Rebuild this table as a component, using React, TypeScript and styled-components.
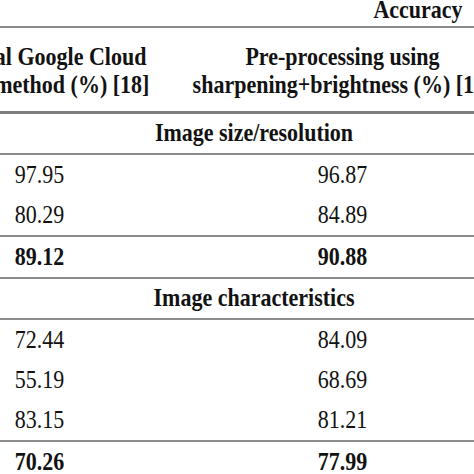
import React from "react";
import styled, { createGlobalStyle, css } from "styled-components";

const Global = createGlobalStyle`
  html, body { margin: 0; padding: 0; background: #ffffff; }
  body {
    font-family: "Liberation Serif", "Times New Roman", serif;
    color: #121212;
  }
`;

/* the source glyphs are slightly taller than they are wide */
const tall = css`
  transform: scaleY(1.15);
  transform-origin: 50% 50%;
`;

const Viewport = styled.div`
  width: 474px;
  height: 474px;
  overflow: hidden;
  background: #ffffff;
`;

const Table = styled.div`
  width: 606px;
  margin-left: -112px;
  display: flex;
  flex-direction: column;
  font-size: 22px;
`;

const Rule = styled.div<{ $thick?: boolean }>`
  height: ${(p) => (p.$thick ? 3 : 2)}px;
  background: ${(p) => (p.$thick ? "#7e7e7e" : "#8c8c8c")};
  flex: none;
`;

const GroupTitle = styled.div`
  height: 26px;
  padding: 2px 0 0 454px;
  box-sizing: border-box;
  line-height: 15px;
  font-weight: 700;
  text-align: center;
  white-space: nowrap;
`;

const Label = styled.span`
  display: inline-block;
  ${tall}
`;

const HeaderRow = styled.div`
  display: grid;
  grid-template-columns: 303px 303px;
  padding: 18.5px 0 15.8px;
  line-height: 24.35px;
  font-weight: 700;
`;

const HeaderCell = styled.div`
  text-align: center;
  white-space: nowrap;
  ${tall}
`;

const SectionRow = styled.div`
  height: 39px;
  padding-left: 126px;
  box-sizing: border-box;
  display: flex;
  align-items: center;
  justify-content: center;
  font-weight: 700;
  white-space: nowrap;
`;

const DataRow = styled.div<{ $total?: boolean }>`
  display: grid;
  grid-template-columns: 303px 303px;
  height: 40px;
  align-items: center;
  font-weight: ${(p) => (p.$total ? 700 : 400)};
`;

const Value = styled.div`
  text-align: center;
  ${tall}
`;

type Group = {
  title: string;
  rows: [string, string][];
  total: [string, string];
};

const groups: Group[] = [
  {
    title: "Image size/resolution",
    rows: [
      ["97.95", "96.87"],
      ["80.29", "84.89"],
    ],
    total: ["89.12", "90.88"],
  },
  {
    title: "Image characteristics",
    rows: [
      ["72.44", "84.09"],
      ["55.19", "68.69"],
      ["83.15", "81.21"],
    ],
    total: ["70.26", "77.99"],
  },
];

export default function App() {
  return (
    <>
      <Global />
      <Viewport>
        <Table>
          <GroupTitle>
            <Label>Accuracy</Label>
          </GroupTitle>
          <Rule />
          <HeaderRow>
            <HeaderCell>
              Original Google Cloud
              <br />
              Vision method (%) [18]
            </HeaderCell>
            <HeaderCell>
              Pre-processing using
              <br />
              sharpening+brightness (%) [19]
            </HeaderCell>
          </HeaderRow>
          <Rule $thick />
          {groups.map((g, gi) => (
            <React.Fragment key={g.title}>
              {gi > 0 && <Rule />}
              <SectionRow>
                <Label>{g.title}</Label>
              </SectionRow>
              <Rule />
              {g.rows.map((r, i) => (
                <DataRow key={i}>
                  <Value>{r[0]}</Value>
                  <Value>{r[1]}</Value>
                </DataRow>
              ))}
              <Rule />
              <DataRow $total>
                <Value>{g.total[0]}</Value>
                <Value>{g.total[1]}</Value>
              </DataRow>
            </React.Fragment>
          ))}
        </Table>
      </Viewport>
    </>
  );
}
